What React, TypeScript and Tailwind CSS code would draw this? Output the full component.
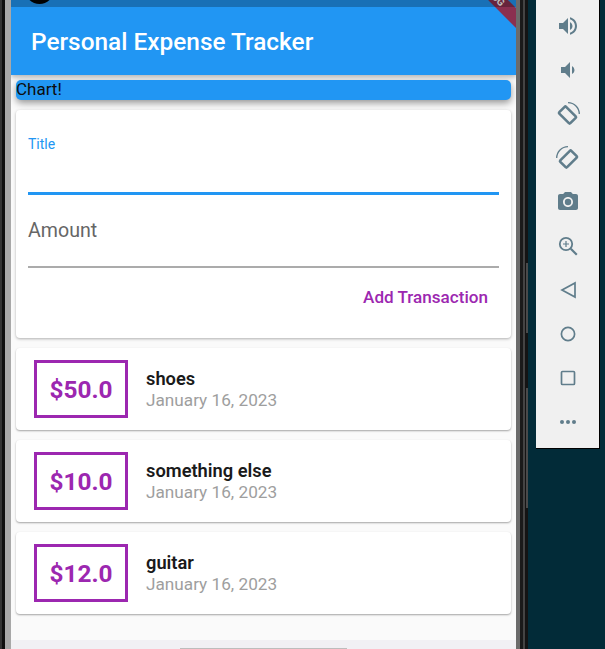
import { MdCameraAlt, MdVolumeDown, MdVolumeUp } from "react-icons/md";

const transactions = [
  { amount: "$50.0", title: "shoes", date: "January 16, 2023" },
  { amount: "$10.0", title: "something else", date: "January 16, 2023" },
  { amount: "$12.0", title: "guitar", date: "January 16, 2023" },
];

function RotateLeft() {
  return (
    <svg viewBox="0 0 24 24" className="h-6 w-6" fill="none" stroke="currentColor">
      <rect x="6.7" y="5.2" width="9.6" height="15.6" rx="1" strokeWidth="2.6" transform="rotate(-45 11.5 13)" />
      <path d="M12 .7A11.3 11.3 0 0 1 23.3 12" strokeWidth="1.3" />
    </svg>
  );
}

function RotateRight() {
  return (
    <svg viewBox="0 0 24 24" className="h-6 w-6" fill="none" stroke="currentColor">
      <rect x="7.7" y="5.2" width="9.6" height="15.6" rx="1" strokeWidth="2.6" transform="rotate(45 12.5 13)" />
      <path d="M12 .7A11.3 11.3 0 0 0 .7 12" strokeWidth="1.3" />
    </svg>
  );
}

function ZoomIn() {
  return (
    <svg viewBox="0 0 24 24" className="h-6 w-6" fill="none" stroke="currentColor">
      <circle cx="10" cy="10" r="6.2" strokeWidth="1.8" />
      <path d="M14.8 14.8l6 6" strokeWidth="2.2" />
      <path d="M10 7v6M7 10h6" strokeWidth="1.2" />
    </svg>
  );
}

function BackIcon() {
  return (
    <svg viewBox="0 0 24 24" className="h-6 w-6" fill="none" stroke="currentColor" strokeWidth="1.7">
      <path d="M19 5v14L6 12z" />
    </svg>
  );
}

function HomeIcon() {
  return (
    <svg viewBox="0 0 24 24" className="h-6 w-6" fill="none" stroke="currentColor" strokeWidth="1.7">
      <circle cx="12" cy="12" r="6.6" />
    </svg>
  );
}

function SquareIcon() {
  return (
    <svg viewBox="0 0 24 24" className="h-6 w-6" fill="none" stroke="currentColor" strokeWidth="1.7">
      <rect x="5.5" y="5.5" width="13" height="13" rx="1" />
    </svg>
  );
}

function MoreIcon() {
  return (
    <svg viewBox="0 0 24 24" className="h-6 w-6" fill="currentColor">
      <circle cx="6" cy="12" r="2" />
      <circle cx="12" cy="12" r="2" />
      <circle cx="18" cy="12" r="2" />
    </svg>
  );
}

function EmulatorPanel() {
  return (
    <div className="ml-2 flex h-[449px] w-[64px] flex-col items-center gap-[20px] border-r border-b border-black bg-[#f0f0f0] pt-[14px] text-[#607d8b]">
      <MdVolumeUp className="h-6 w-6" />
      <MdVolumeDown className="h-6 w-6" />
      <RotateLeft />
      <RotateRight />
      <MdCameraAlt className="h-6 w-6" />
      <ZoomIn />
      <BackIcon />
      <HomeIcon />
      <SquareIcon />
      <MoreIcon />
    </div>
  );
}

function TransactionCard({ amount, title, date }: { amount: string; title: string; date: string }) {
  return (
    <div className="flex h-[82px] items-center rounded bg-white pl-[18px] shadow-[0_1px_2px_rgba(0,0,0,0.35)]">
      <div className="flex h-[58px] w-[94px] items-center justify-center border-[3px] border-[#9c27b0] pt-[2px] text-[24.4px] font-bold text-[#9c27b0]">
        {amount}
      </div>
      <div className="ml-[18px] flex flex-col">
        <span className="text-[18.3px] leading-[21px] font-semibold text-[#1a1a1a]">{title}</span>
        <span className="mt-px text-[17.2px] leading-[21px] text-[#9e9e9e]">{date}</span>
      </div>
    </div>
  );
}

function App() {
  return (
    <div className="flex h-[649px] w-[605px] overflow-hidden bg-[#022b38] font-['Roboto',sans-serif]">
      <div className="relative flex h-full w-[528px] shrink-0">
        <div className="w-[2px] bg-[#333333]" />
        <div className="w-[3px] bg-[#0f0f0f]" />
        <div className="w-[6px] bg-[#a8a8a8]" />
        <div className="relative flex w-[505px] flex-col overflow-hidden bg-[#fafafa]">
          <header className="flex h-[75px] items-center bg-[#2196f3] pt-[9px] pl-[20px] shadow-[0_2px_5px_rgba(0,0,0,0.3)]">
            <h1 className="text-[24.4px] font-medium text-white">Personal Expense Tracker</h1>
          </header>
          <div className="flex flex-1 flex-col px-[5px] pt-[5px]">
            <div className="flex h-[20px] items-center rounded-[5px] bg-[#2196f3] text-[17px] text-[#0d0d0d] shadow-[0_3px_7px_rgba(0,0,0,0.4)]">
              Chart!
            </div>
            <form className="mt-[10px] flex h-[228px] flex-col rounded bg-white px-[12px] shadow-[0_1px_3px_rgba(0,0,0,0.3)]">
              <span className="mt-[25px] text-[14px] leading-[18px] text-[#2196f3]">Title</span>
              <div className="mt-[39px] h-[3px] bg-[#2196f3]" />
              <span className="mt-[24px] text-[19.6px] leading-[24px] text-[#666666]">Amount</span>
              <div className="mt-[23px] h-[2px] bg-[#ababab]" />
              <div className="mt-[19px] flex justify-end pr-[11px]">
                <button type="button" className="text-[17.1px] leading-[20px] font-medium text-[#9c27b0]">
                  Add Transaction
                </button>
              </div>
            </form>
            <div className="mt-[10px] flex flex-col gap-[10px]">
              {transactions.map((tx) => (
                <TransactionCard key={tx.amount} {...tx} />
              ))}
            </div>
          </div>
          <div className="flex h-[9px] items-end justify-center bg-[#f1f0f4]">
            <div className="h-px w-[167px] bg-[#bdbdbd]" />
          </div>
          {/* debug banner, cut off by the status bar */}
          <div className="absolute top-[2px] right-[-21px] h-[14px] w-[60px] rotate-45 bg-[#8a3050]">
            <span className="absolute right-[36px] bottom-0 text-[10px] leading-[14px] font-bold text-white">
              DEBUG
            </span>
          </div>
          <div className="absolute inset-x-0 top-0 h-[7px] overflow-hidden bg-black/25">
            <div className="absolute top-[-25px] left-[14px] h-[29px] w-[29px] rounded-full bg-black" />
          </div>
        </div>
        <div className="w-[4px] bg-[#6b6b6b]" />
        <div className="w-[3px] bg-[#1a1a1a]" />
        <div className="w-[2px] bg-[#444444]" />
        <div className="w-[3px] bg-[#141414]" />
        {/* side buttons of the device frame */}
        <div className="absolute top-[263px] right-0 h-[70px] w-[2px] bg-[#4a4a4a]" />
        <div className="absolute top-[388px] right-0 h-[120px] w-[2px] bg-[#4a4a4a]" />
      </div>
      <EmulatorPanel />
    </div>
  );
}

export default App;
